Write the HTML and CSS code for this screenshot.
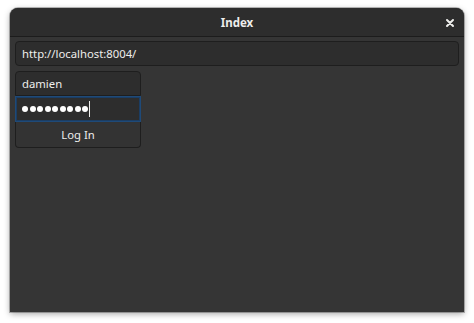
FILE: index.html
```html
<!DOCTYPE html>
<html>
<head>
<meta charset="utf-8">
<link rel="stylesheet" href="styles.css">
</head>
<body>
<div class="window">
  <div class="titlebar">
    <span class="title">Index</span>
    <span class="close">
      <svg width="10" height="10" viewBox="0 0 10 10"><path d="M2 2 L8 8 M8 2 L2 8" stroke="#eeeeec" stroke-width="2" stroke-linecap="round"/></svg>
    </span>
  </div>
  <div class="content">
    <div class="entry url">http://localhost:8004/</div>
    <div class="form">
      <div class="entry user">damien</div>
      <div class="entry pass focused"><span class="dots"><i></i><i></i><i></i><i></i><i></i><i></i><i></i><i></i><i></i></span><span class="caret"></span></div>
      <div class="button">Log In</div>
    </div>
  </div>
</div>
</body>
</html>
```
FILE: styles.css
```css
html, body {
  margin: 0;
  padding: 0;
  background: #ffffff;
}
body {
  width: 474px;
  height: 323px;
  overflow: hidden;
  font-family: "Noto Sans", "Open Sans", sans-serif;
  font-size: 11.3px;
  color: #eeeeec;
}
.window {
  margin: 8px 0 0 10px;
  width: 454px;
  height: 304px;
  background: #353535;
  border-radius: 8px 8px 0 0;
  box-shadow: 0 2px 6px rgba(0,0,0,0.35), 0 0 0 1px rgba(0,0,0,0.25);
  display: flex;
  flex-direction: column;
  overflow: hidden;
}
.titlebar {
  height: 28px;
  background: #2d2d2d;
  border-bottom: 1px solid #1c1c1c;
  display: flex;
  align-items: center;
  justify-content: center;
  position: relative;
  flex: none;
}
.title {
  font-weight: bold;
  font-size: 11.5px;
  color: #eeeeec;
}
.close {
  position: absolute;
  right: 9px;
  top: 10px;
  width: 10px;
  height: 10px;
  display: flex;
}
.content {
  padding: 4px 5px;
  display: flex;
  flex-direction: column;
  gap: 5px;
}
.entry {
  box-sizing: border-box;
  height: 25px;
  background: #2d2d2d;
  border: 1px solid #1e1e1e;
  border-radius: 4px;
  padding: 0 6px;
  display: flex;
  align-items: center;
  color: #eeeeec;
}
.form {
  width: 126px;
  display: flex;
  flex-direction: column;
}
.user {
  height: 25px;
  border-radius: 4px 4px 0 0;
}
.pass {
  height: 26px;
  border-radius: 0;
}
.focused {
  border: 1px solid #1f4a78;
  box-shadow: inset 0 0 0 1px #1b3d63;
}
.dots {
  display: flex;
  gap: 1.5px;
}
.dots i {
  display: block;
  width: 6px;
  height: 6px;
  border-radius: 50%;
  background: #ffffff;
}
.caret {
  width: 1px;
  height: 16px;
  background: #eeeeec;
  margin-left: 1px;
}
.button {
  box-sizing: border-box;
  height: 26px;
  background: #333333;
  border: 1px solid #1e1e1e;
  border-top: none;
  border-radius: 0 0 4px 4px;
  display: flex;
  align-items: center;
  justify-content: center;
  color: #eeeeec;
}
```
